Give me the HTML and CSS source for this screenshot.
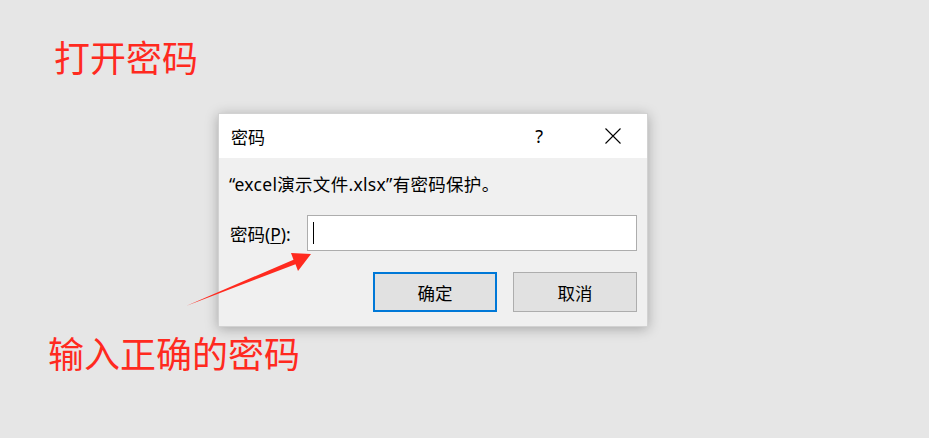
FILE: index.html
```html
<!DOCTYPE html>
<html lang="zh-CN">
<head>
<meta charset="utf-8">
<title>密码</title>
<link rel="stylesheet" href="styles.css">
</head>
<body>
<div class="page">
  <h1 class="note note-top">打开密码</h1>
  <div class="dialog">
    <div class="titlebar">
      <span class="title">密码</span>
      <div class="title-actions">
        <span class="help">?</span>
        <span class="close">
          <svg width="16" height="16" viewBox="0 0 16 16"><path d="M0.5 0.5 L15.5 15.5 M15.5 0.5 L0.5 15.5" stroke="#000" stroke-width="1.1" fill="none"/></svg>
        </span>
      </div>
    </div>
    <div class="body">
      <p class="message">“excel演示文件.xlsx”有密码保护。</p>
      <div class="field">
        <label class="label">密码(<u>P</u>):</label>
        <div class="input"><span class="caret"></span></div>
      </div>
      <div class="buttons">
        <button class="btn btn-default">确定</button>
        <button class="btn">取消</button>
      </div>
    </div>
  </div>
  <h2 class="note note-bottom">输入正确的密码</h2>
  <svg class="arrow" width="929" height="438" viewBox="0 0 929 438">
    <polygon points="186,306 293.5,259.7 291,253 311,254 298,271 295.5,264.3" fill="#ff2a1f"/>
  </svg>
</div>
</body>
</html>
```

FILE: styles.css
```css
html, body {
  margin: 0;
  padding: 0;
}
body {
  background: #e6e6e6;
  font-family: "Noto Sans", "Noto Sans CJK SC", sans-serif;
  width: 929px;
  height: 438px;
  overflow: hidden;
}
.page {
  position: relative;
  width: 929px;
  height: 438px;
  padding-top: 34px;
  box-sizing: border-box;
}
.note {
  margin: 0;
  font-family: "Noto Sans CJK SC", sans-serif;
  font-weight: normal;
  font-size: 36px;
  line-height: 44px;
  color: #ff2a1f;
}
.note-top {
  padding-left: 54px;
}
.note-bottom {
  padding-left: 48px;
  margin-top: 3px;
}
.dialog {
  margin: 35px 0 0 218px;
  width: 430px;
  height: 214px;
  box-sizing: border-box;
  background: #f0f0f0;
  border: 1px solid #d2d2d2;
  box-shadow: 0 2px 12px rgba(0, 0, 0, 0.28);
  font-family: "Noto Sans", "Noto Sans CJK SC", sans-serif;
  color: #000;
}
.titlebar {
  height: 44px;
  background: #fff;
  display: flex;
  align-items: center;
  justify-content: space-between;
  padding-left: 12px;
}
.title {
  font-family: "Noto Sans CJK SC", sans-serif;
  font-size: 17px;
}
.title-actions {
  display: flex;
  align-items: center;
  gap: 62px;
  padding-right: 26px;
}
.help {
  font-size: 18px;
  line-height: 20px;
}
.close {
  display: flex;
  width: 16px;
  height: 16px;
}
.body {
  padding: 16px 10px 0 10px;
}
.message {
  margin: 0;
  font-size: 17.5px;
  letter-spacing: 0.3px;
  line-height: 20px;
}
.field {
  display: flex;
  align-items: center;
  margin-top: 21px;
}
.label {
  width: 78px;
  font-size: 17.5px;
  padding-left: 1px;
  box-sizing: border-box;
}
.label u {
  text-underline-offset: 2px;
}
.input {
  flex: 1;
  height: 36px;
  box-sizing: border-box;
  background: #fff;
  border: 1px solid #adadad;
  display: flex;
  align-items: center;
  padding-left: 5px;
}
.caret {
  width: 1px;
  height: 22px;
  background: #000;
}
.buttons {
  display: flex;
  justify-content: flex-end;
  gap: 16px;
  margin-top: 21px;
}
.btn {
  width: 124px;
  height: 40px;
  box-sizing: border-box;
  background: #e1e1e1;
  border: 1px solid #adadad;
  font-family: "Noto Sans CJK SC", sans-serif;
  font-size: 17.5px;
  color: #000;
  padding: 0;
  margin: 0;
}
.btn-default {
  border: 2px solid #0078d7;
}
.arrow {
  position: absolute;
  left: 0;
  top: 0;
  pointer-events: none;
}
```
